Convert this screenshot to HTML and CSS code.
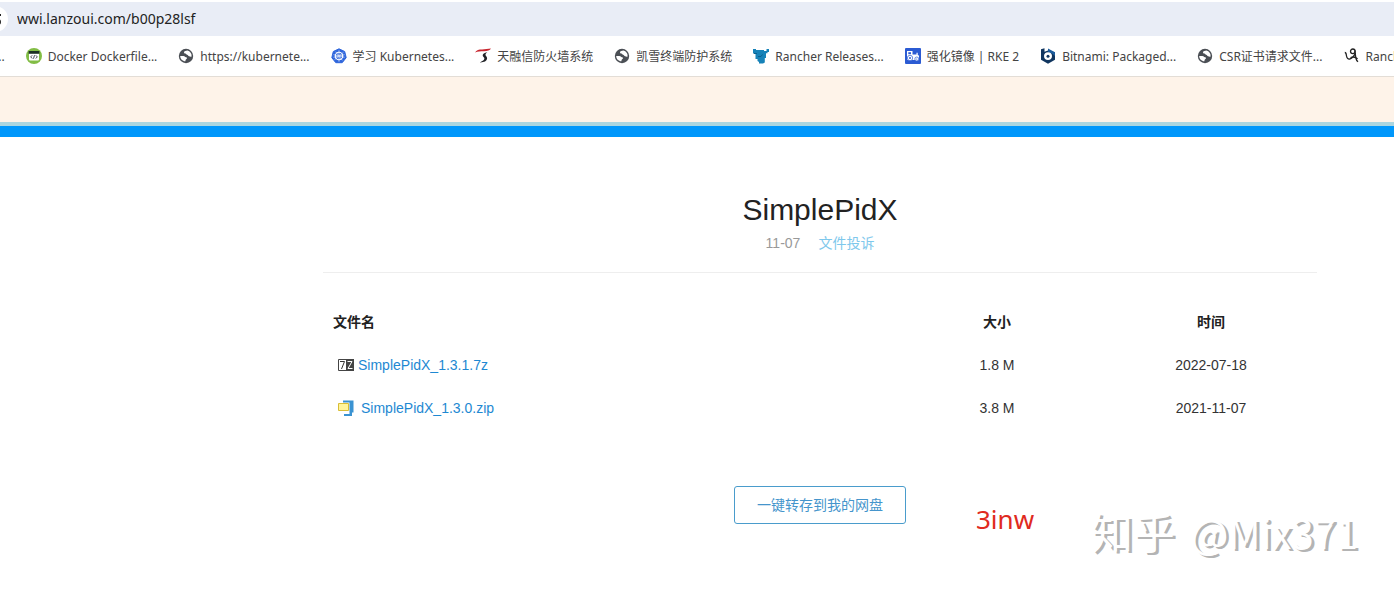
FILE: index.html
```html
<!DOCTYPE html>
<html lang="zh-CN">
<head>
    <meta charset="UTF-8">
    <meta name="viewport" content="width=device-width, initial-scale=1.0">
    <title>SimplePidX</title>
    <link rel="stylesheet" href="styles.css">
</head>
<body>
    <svg class="symbols" aria-hidden="true">
        <symbol id="globe" viewBox="0 0 16 16">
            <circle cx="8" cy="8" r="7.200" fill="#4b4f55"/>
            <path d="M2.200 8h3.200c1.300 0 1.400 1.200 2.600 1.300 1.300.1 1.300 1.200.4 1.700-.9.400-.8 1.300-1 2.300C4.500 13.100 2.200 11 2.200 8z" fill="#fff"/>
            <path d="M9.400 2.600C7.800 2.700 6.500 3.200 6.100 4c-.4.900.3 1.500 1.300 1.500.9 0 .7 1.100 1.700 1.300 1 .1 1 1.400 2 1.500.9.100 1.500.9 2.500.1.300-2.700-1.400-5.100-4.200-5.800z" fill="#fff"/>
        </symbol>
    </svg>

    <div class="address-bar">
        <button class="site-info" aria-label="Site information">
            <svg width="14" height="14" viewBox="0 0 14 14" fill="none" stroke="#222" stroke-width="2">
                <path d="M7 3h6M1 10h6"/><circle cx="3" cy="3" r="2"/><circle cx="10" cy="10" r="2"/>
            </svg>
        </button>
        <input class="address-input" type="text" aria-label="Address" value="wwi.lanzoui.com/b00p28lsf">
    </div>

    <nav class="bookmarks">
        <a class="bookmark" href="#"><span>...</span></a>
        <a class="bookmark" href="#">
            <svg width="16" height="16" viewBox="0 0 16 16"><circle cx="8" cy="8" r="8" fill="#82bd45"/><rect x="3" y="4" width="10" height="8.500" rx="1" fill="#fff"/><path d="M2.600 3h10.800v2.800H2.600z" fill="#1d3025"/><path d="M6.200 7.300L4.700 8.900l1.500 1.600M9.800 7.300l1.500 1.600-1.500 1.600M8.500 7.200l-1 3.500" fill="none" stroke="#334" stroke-width=".9"/></svg>
            <span>Docker Dockerfile...</span>
        </a>
        <a class="bookmark" href="#">
            <svg width="16" height="16"><use href="#globe"/></svg>
            <span>https://kubernete...</span>
        </a>
        <a class="bookmark" href="#">
            <svg width="16" height="16" viewBox="0 0 16 16"><path d="M8 .8l5.700 2.700 1.500 6.200-4 5H4.800l-4-5 1.500-6.200z" fill="#2f66dc" stroke="#2f66dc" stroke-linejoin="round"/><circle cx="8" cy="8" r="3.700" fill="none" stroke="#fff" stroke-width="1.100"/><path d="M8 2.300V7M8 9v4.700M2.500 6.700l4.500 1M9 8.300l4.500 1M3.600 11.600L7 8.800M9 7.200l3.400-2.800M4.700 3.800l2.600 3.300M8.700 9l2.600 3.300M13.500 6.700L9 7.700M2.500 9.300L7 8.300" stroke="#fff" stroke-width=".6"/><circle cx="8" cy="8" r="1" fill="#fff"/></svg>
            <span>学习 Kubernetes...</span>
        </a>
        <a class="bookmark" href="#">
            <svg width="16" height="16" viewBox="0 0 16 16"><path d="M0 4.500C1.500 2 4 1.500 7 1.500L16 .6c-1 2-3.500 2.500-7 2.700C5 3.400 3 3.500 0 4.500z" fill="#c8262f"/><path d="M12.300 4.200C9.300 4.500 7.500 6.200 7.700 7.700c.2 1.300 2.200 1.700 1.600 3.400-.4 1.400-2.200 2.400-4.400 3.300 3.800.2 6.800-1.200 7.200-3.600.3-1.800-1.500-2.600-1.600-3.700-.1-1.100.6-2.100 1.800-2.900z" fill="#202226"/></svg>
            <span>天融信防火墙系统</span>
        </a>
        <a class="bookmark" href="#">
            <svg width="16" height="16"><use href="#globe"/></svg>
            <span>凯雪终端防护系统</span>
        </a>
        <a class="bookmark" href="#">
            <svg width="16" height="16" viewBox="0 0 16 16"><path d="M0 1h3v1h8v1h2.500V1H16v3h-1.500v1.200H13V8H4V5.500H0z" fill="#1682b8"/><path d="M2.500 5H13v5h-1.200v4.500L10 15.500H6V14l-1.500-1v-2h-2z" fill="#1682b8"/><path d="M1 5.500h3M5 8.500h3l1.500-2" stroke="#0b608f" fill="none"/></svg>
            <span>Rancher Releases...</span>
        </a>
        <a class="bookmark" href="#">
            <svg width="16" height="16" viewBox="0 0 16 16"><rect width="16" height="16" rx="1" fill="#2b5bd3"/><path d="M2 3h5.500v3.500h4V4.800h1.200v2l1.300 1V12H2z" fill="#fff"/><path d="M3.300 4.200h2.700v2H3.300z" fill="#2b5bd3"/><circle cx="5" cy="10" r="2.700" fill="#fff" stroke="#2b5bd3" stroke-width=".7"/><circle cx="5" cy="10" r="1" fill="#2b5bd3"/><circle cx="11.800" cy="11" r="2" fill="#fff" stroke="#2b5bd3" stroke-width=".7"/><circle cx="11.800" cy="11" r=".6" fill="#2b5bd3"/></svg>
            <span>强化镜像 | RKE 2</span>
        </a>
        <a class="bookmark" href="#">
            <svg width="16" height="16" viewBox="0 0 16 16"><path d="M1 1.200L4.500.2v3.500L8 2.500l7 1.800v7.500L8 15.800l-7-4z" fill="#10355f"/><path d="M8 .6l7 3.600V8l-3-2.500L8 4z" fill="#1c5c9c"/><path d="M8 4.200c2.500 0 4 1.500 4 3.900s-1.500 4-4 4-4-1.600-4-4 1.500-3.900 4-3.900z" fill="#fff"/><circle cx="8" cy="8.200" r="1.500" fill="#10355f"/></svg>
            <span>Bitnami: Packaged...</span>
        </a>
        <a class="bookmark" href="#">
            <svg width="16" height="16"><use href="#globe"/></svg>
            <span>CSR证书请求文件...</span>
        </a>
        <a class="bookmark" href="#">
            <svg width="16" height="16" viewBox="0 0 16 16" fill="none" stroke="#222" stroke-width="1.300"><path d="M.8 4.500c1.400 0 1.400 1.500 1.700 3.500.4 2.400 1.700 3.600 3.600 2.900 2-.7 3.900-2.900 5.400-5.700"/><circle cx="8.800" cy="3.300" r="2.300"/><path d="M10.800 2.500c.5 2.500.5 5.500 1.200 8 .3 1.400 1 2.500 2 3.300M6.500 9.500c2.500-.8 5.500-.4 7 1.500"/></svg>
            <span>Rancher</span>
        </a>
    </nav>

    <div class="notice"></div>

    <main class="content">
        <header class="folder-header">
            <h1>SimplePidX</h1>
            <div class="folder-meta">
                <span>11-07</span>
                <a href="#">文件投诉</a>
            </div>
        </header>

        <table class="files">
            <thead>
                <tr>
                    <th class="col-name">文件名</th>
                    <th class="col-size">大小</th>
                    <th class="col-time">时间</th>
                </tr>
            </thead>
            <tbody>
                <tr>
                    <td class="col-name">
                        <a class="file-link" href="#">
                            <svg width="16" height="12" viewBox="0 0 16 12"><path d="M.5.5h15v11H.5z" fill="#fff" stroke="#444"/><path d="M8 0h8v12H8z" fill="#444"/><path d="M2 2.500h4.500L3.500 10" fill="none" stroke="#333"/><path d="M9.500 2.500H14L10 9.500h4.500" fill="none" stroke="#fff"/></svg>
                            <span>SimplePidX_1.3.1.7z</span>
                        </a>
                    </td>
                    <td class="col-size">1.8 M</td>
                    <td class="col-time">2022-07-18</td>
                </tr>
                <tr>
                    <td class="col-name">
                        <a class="file-link file-zip" href="#">
                            <svg width="16" height="16" viewBox="0 0 16 16"><path d="M5 .5h10.500v12H14V16H6v-2h5.500V2.500H5z" fill="#3b93d2"/><path d="M.5 3.500h10v7H.5z" fill="#fff49a" stroke="#d8bd35"/></svg>
                            <span>SimplePidX_1.3.0.zip</span>
                        </a>
                    </td>
                    <td class="col-size">3.8 M</td>
                    <td class="col-time">2021-11-07</td>
                </tr>
            </tbody>
        </table>

        <div class="actions">
            <button class="save-btn">一键转存到我的网盘</button>
            <span class="password-note">3inw</span>
        </div>
    </main>

    <div class="watermark">知乎 <span>@Mix371</span></div>
</body>
</html>
```

FILE: styles.css
```css
body {
    margin: 0;
    padding-top: 2px;
    font-family: "Liberation Sans", "Noto Sans CJK SC", sans-serif;
    font-size: 14px;
    color: #333;
    background-color: #fff;
}
a {
    text-decoration: none;
}
.symbols {
    display: none;
}

/* Browser bars */
.address-bar {
    display: flex;
    align-items: center;
    height: 34px;
    background-color: #e9edf6;
    overflow: hidden;
}
.site-info {
    flex: none;
    display: flex;
    align-items: center;
    justify-content: center;
    width: 26px;
    height: 26px;
    margin-left: -18px;
    padding: 0;
    border: none;
    border-radius: 50%;
    background-color: #fff;
}
.address-input {
    flex: 1;
    margin-left: 9px;
    padding: 0 0 2px;
    border: none;
    outline: none;
    background: none;
    font-family: "Noto Sans", sans-serif;
    font-size: 14px;
    color: #222;
}
.bookmarks {
    display: flex;
    align-items: center;
    gap: 21px;
    height: 40px;
    margin-left: -5px;
    overflow: hidden;
    white-space: nowrap;
}
.bookmark {
    flex: none;
    display: flex;
    align-items: center;
    gap: 6px;
    font-family: "Noto Sans", "Noto Sans CJK SC", sans-serif;
    font-size: 12px;
    line-height: 16px;
    color: #444;
}
.bookmark span {
    padding-top: 2px;
}

/* Page */
.notice {
    height: 45px;
    border-top: 1px solid #e3ddd6;
    border-bottom: 4px solid #abd6e0;
    background-color: #fef3e9;
    box-shadow: 0 11px 0 #0097fb;
}
.content {
    margin-top: 11px;
    padding: 50px 77px 0 323px;
}
.folder-header {
    padding-bottom: 19px;
    border-bottom: 1px solid #eee;
    text-align: center;
}
.folder-header h1 {
    margin: 0;
    font-size: 30px;
    font-weight: normal;
    line-height: 46px;
    color: #222;
}
.folder-meta {
    display: flex;
    justify-content: center;
    gap: 18px;
    line-height: 20px;
    color: #999;
}
.folder-meta a {
    color: #7ec8ec;
}
.files {
    width: 100%;
    margin-top: 27px;
    border-collapse: collapse;
    table-layout: fixed;
}
.files th,
.files td {
    height: 43px;
    padding: 0 10px;
    line-height: 20px;
    text-align: center;
}
.files th {
    color: #222;
}
.files .col-name {
    text-align: left;
}
.files th.col-size {
    width: 196px;
}
.files th.col-time {
    width: 192px;
}
.file-link {
    display: flex;
    align-items: center;
    gap: 4px;
    padding-left: 5px;
    color: #1e88d2;
}
.file-zip {
    gap: 7px;
}
.actions {
    display: grid;
    grid-template-columns: 1fr auto 1fr;
    margin-top: 57px;
}
.save-btn {
    grid-column: 2;
    width: 172px;
    height: 38px;
    padding: 0 0 2px;
    border: 1px solid #4a9ccc;
    border-radius: 3px;
    background-color: #fff;
    font-family: inherit;
    font-size: 14px;
    color: #4595cc;
    cursor: pointer;
}
.password-note {
    margin: 15px 0 0 70px;
    font-family: "Noto Sans", sans-serif;
    font-size: 26px;
    line-height: 36px;
    color: #e02a20;
}
.watermark {
    position: absolute;
    right: 36px;
    bottom: 32px;
    font-family: "Noto Sans CJK SC", sans-serif;
    font-size: 42px;
    line-height: 56px;
    color: #fff;
    text-shadow: 3px 2px 0 #b4b4b4;
}
.watermark span {
    margin-left: 6px;
    font-size: 40px;
}
```
